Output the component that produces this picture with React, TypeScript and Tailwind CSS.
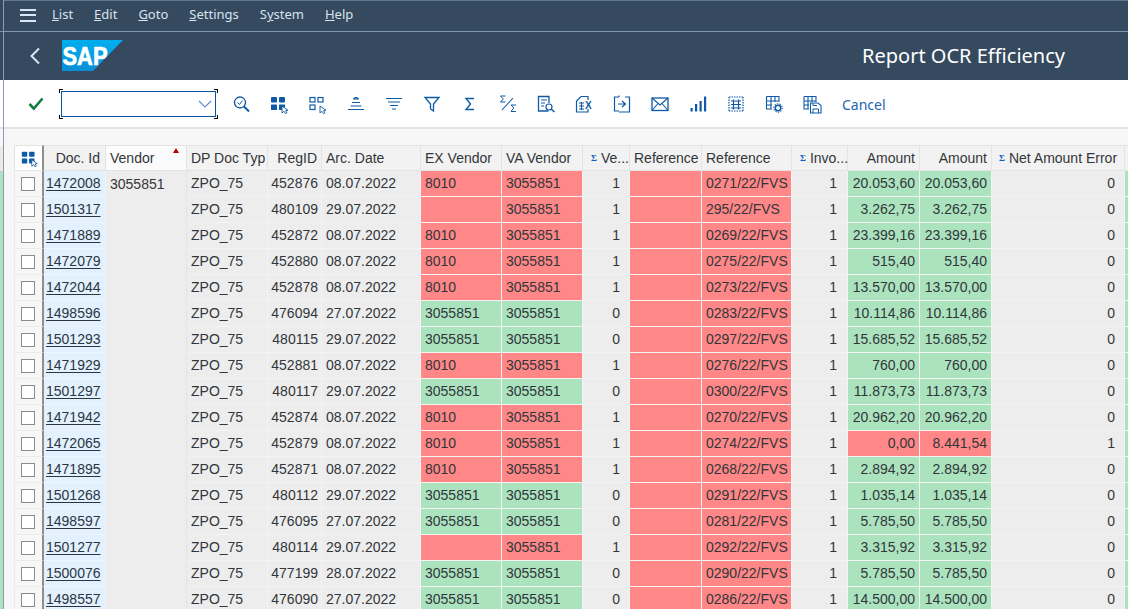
import React from "react";

type Tone = "r" | "g";
type Row = {
  id: string; reg: string; date: string; ex: string; exT: Tone; va: string; vaT: Tone; ve: string;
  ref: string; a1: string; a1T: Tone; a2: string; a2T: Tone; err: string; vendor?: string;
};

const red = (id: string, reg: string, date: string, ex: string, ref: string, amt: string): Row => ({
  id, reg, date, ex, exT: "r", va: "3055851", vaT: "r", ve: "1", ref, a1: amt, a1T: "g", a2: amt, a2T: "g", err: "0",
});
const green = (id: string, reg: string, date: string, ref: string, amt: string): Row => ({
  id, reg, date, ex: "3055851", exT: "g", va: "3055851", vaT: "g", ve: "0", ref, a1: amt, a1T: "g", a2: amt, a2T: "g", err: "0",
});

const rows: Row[] = [
  { ...red("1472008", "452876", "08.07.2022", "8010", "0271/22/FVS", "20.053,60"), vendor: "3055851" },
  red("1501317", "480109", "29.07.2022", "", "295/22/FVS", "3.262,75"),
  red("1471889", "452872", "08.07.2022", "8010", "0269/22/FVS", "23.399,16"),
  red("1472079", "452880", "08.07.2022", "8010", "0275/22/FVS", "515,40"),
  red("1472044", "452878", "08.07.2022", "8010", "0273/22/FVS", "13.570,00"),
  green("1498596", "476094", "27.07.2022", "0283/22/FVS", "10.114,86"),
  green("1501293", "480115", "29.07.2022", "0297/22/FVS", "15.685,52"),
  red("1471929", "452881", "08.07.2022", "8010", "0276/22/FVS", "760,00"),
  green("1501297", "480117", "29.07.2022", "0300/22/FVS", "11.873,73"),
  red("1471942", "452874", "08.07.2022", "8010", "0270/22/FVS", "20.962,20"),
  { ...red("1472065", "452879", "08.07.2022", "8010", "0274/22/FVS", "0,00"), a1T: "r", a2: "8.441,54", a2T: "r", err: "1" },
  red("1471895", "452871", "08.07.2022", "8010", "0268/22/FVS", "2.894,92"),
  green("1501268", "480112", "29.07.2022", "0291/22/FVS", "1.035,14"),
  green("1498597", "476095", "27.07.2022", "0281/22/FVS", "5.785,50"),
  red("1501277", "480114", "29.07.2022", "", "0292/22/FVS", "3.315,92"),
  green("1500076", "477199", "28.07.2022", "0290/22/FVS", "5.785,50"),
  green("1498557", "476090", "27.07.2022", "0286/22/FVS", "14.500,00"),
];

const BLUE = "#0f5aa6";

const Icon = ({ children }: { children: React.ReactNode }) => (
  <button className="w-[38px] h-[24px] flex items-center justify-center shrink-0">
    <svg width="22" height="22" viewBox="0 0 22 22" fill="none" stroke={BLUE} strokeWidth="1.2">
      {children}
    </svg>
  </button>
);

const Cursor = () => (
  <path d="M13 13 L13 20 L15 18.3 L16.5 20.6 L18 19.8 L16.6 17.6 L19 17.2 Z" fill="#fff" stroke={BLUE} strokeWidth="0.9" />
);

const Tile = () => (
  <g>
    <rect x="2" y="4" width="6" height="5.5" rx="1" fill={BLUE} stroke="none" />
    <rect x="10" y="4" width="6" height="5.5" rx="1" fill={BLUE} stroke="none" />
    <rect x="2" y="11.5" width="6" height="5.5" rx="0.5" fill={BLUE} stroke="none" />
    <rect x="10" y="11.5" width="6" height="5.5" rx="0.5" fill={BLUE} stroke="none" />
    <Cursor />
  </g>
);

const Tb = "border-r border-b border-[#f3f3f3]";
const Th = "border-r border-t border-b border-[#e3e3e3] bg-[#f2f2f2] font-normal p-0 whitespace-nowrap";

const tone = (t: Tone) => (t === "r" ? "bg-[#ff8787]" : "bg-[#abe3bf]");

const Sig = () => (
  <span className="text-[9px] font-bold text-[#0a5fc0] mr-[4px] align-[2px]" style={{ fontFamily: '"Liberation Serif", serif' }}>Σ</span>
);

export default function App() {
  return (
    <div className="flex h-screen w-full overflow-hidden bg-[#f7f7f7] text-[14px] text-[#32363a]" style={{ fontFamily: '"Liberation Sans", Arial, sans-serif' }}>
      {/* Window peeking out behind */}
      <div className="w-[3px] shrink-0 flex flex-col">
        <div className="h-[31px] bg-[#354a5f]" />
        <div className="h-[1px] bg-[#7f93a9]" />
        <div className="h-[48px] bg-[#354a5f]" />
        <div className="h-[47px] bg-white" />
        <div className="h-[2px] bg-[#e2e2e2]" />
        <div className="h-[17px] bg-[#f7f7f7]" />
        <div className="h-[25px] bg-[#f1e8e0]" />
        <div className="flex-1 bg-[#abe3bf]" />
      </div>

      <div className="flex-1 min-w-0 flex flex-col border-l border-[#8a9cb2]">
        {/* Menu bar */}
        <div className="h-[32px] shrink-0 bg-[#354a5f] border-t border-[#5f7993] border-b-[#8097b0] border-b flex items-center pl-[16px] pb-[2px] text-[#d7e3ee]" style={{ fontFamily: '"Noto Sans", sans-serif' }}>
          <div className="w-[16px] h-[13px] flex flex-col justify-between mr-[16px]">
            <div className="h-[2px] bg-[#d6e8f8]" />
            <div className="h-[2px] bg-[#d6e8f8]" />
            <div className="h-[2px] bg-[#d6e8f8]" />
          </div>
          <div className="flex gap-[21px] text-[13px]">
            <span><u>L</u>ist</span>
            <span><u>E</u>dit</span>
            <span><u>G</u>oto</span>
            <span><u>S</u>ettings</span>
            <span>S<u>y</u>stem</span>
            <span><u>H</u>elp</span>
          </div>
        </div>

        {/* Title bar */}
        <div className="h-[48px] shrink-0 bg-[#354a5f] flex items-center pl-[25px] pr-[63px]">
          <svg width="12" height="18" viewBox="0 0 12 18" fill="none" className="mr-[21px]">
            <path d="M10 1.5 L2.5 9 L10 16.5" stroke="#d6e8f8" strokeWidth="2" />
          </svg>
          <svg width="62" height="31" viewBox="0 0 62 31" className="mb-[1px]">
            <defs>
              <linearGradient id="sapg" x1="0" y1="0" x2="0" y2="1">
                <stop offset="0" stopColor="#00aeef" />
                <stop offset="1" stopColor="#0a8fd6" />
              </linearGradient>
            </defs>
            <polygon points="0,0 61,0 31,31 0,31" fill="url(#sapg)" />
            <text x="0.5" y="24.5" fontSize="25" fontWeight="700" fill="#fff" textLength="45" lengthAdjust="spacingAndGlyphs" style={{ fontFamily: '"Liberation Sans", sans-serif' }} stroke="#fff" strokeWidth="0.7">SAP</text>
          </svg>
          <div className="ml-auto text-[20px] text-white" style={{ fontFamily: '"Noto Sans", sans-serif' }}>Report OCR Efficiency</div>
        </div>

        {/* Toolbar */}
        <div className="h-[47px] shrink-0 bg-white border-b-0 flex items-center pl-[24px]">
          <svg width="16" height="14" viewBox="0 0 16 14" fill="none" className="mr-[17px]">
            <path d="M1.5 7 L5.8 11.6 L14.5 1.5" stroke="#107e3e" strokeWidth="2.6" />
          </svg>
          <div className="relative w-[155px] h-[26px] border border-[#0854a0] bg-white flex items-center justify-end pr-[3px] mr-[7px]">
            <svg width="14" height="8" viewBox="0 0 14 8" fill="none"><path d="M1 1 L7 7 L13 1" stroke="#5a8ec8" strokeWidth="1.1" /></svg>
            <span className="absolute -left-[3px] -top-[3px] w-[4px] h-[4px] border-l border-t border-black" />
            <span className="absolute -right-[3px] -top-[3px] w-[4px] h-[4px] border-r border-t border-black" />
            <span className="absolute -left-[3px] -bottom-[3px] w-[4px] h-[4px] border-l border-b border-black" />
            <span className="absolute -right-[3px] -bottom-[3px] w-[4px] h-[4px] border-r border-b border-black" />
          </div>

          <Icon>
            <circle cx="9" cy="9.5" r="5.5" strokeWidth="1.3" />
            <path d="M13 13.5 L18 18.5" strokeWidth="2" />
            <path d="M6.5 9.5 L8.5 11.5 L11.5 7.5" strokeWidth="1" />
          </Icon>
          <Icon><Tile /></Icon>
          <Icon>
            <rect x="3" y="4.5" width="5" height="4.5" />
            <rect x="11" y="4.5" width="5" height="4.5" />
            <rect x="3" y="12" width="5" height="4.5" />
            <Cursor />
          </Icon>
          <Icon>
            <path d="M8.5 6 H13.5 M7 9.5 H15 M5.5 13 H16.5 M3 16.5 H19" />
            <path d="M8.5 6 Q11 3.5 13.5 6" />
          </Icon>
          <Icon>
            <path d="M3 5.5 H19 M5 9 H17 M7 12.5 H15 M9 16 H13" />
          </Icon>
          <Icon>
            <path d="M4 4.5 H18 L12.5 11 V18 L9.5 16 V11 Z" strokeWidth="1.3" />
          </Icon>
          <Icon>
            <path d="M15 5.5 H7 L11.5 11 L7 16.5 H15" strokeWidth="1.4" />
          </Icon>
          <Icon>
            <path d="M8.5 3 H3.5 L6.3 6 L3.5 9 H8.5" strokeWidth="1" />
            <path d="M5 17 L16 5" strokeWidth="1.1" />
            <path d="M19 12 H14 L16.8 15 L14 18.5 H19" strokeWidth="1" />
          </Icon>
          <Icon>
            <path d="M13.5 18 H3.5 V3.5 H14 V10" strokeWidth="1.3" />
            <path d="M6 7 H12 M6 10 H10 M6 13 H9" strokeWidth="1.2" />
            <circle cx="14" cy="14" r="3" strokeWidth="1.2" />
            <path d="M16 16 L19.5 19" strokeWidth="1.6" />
          </Icon>
          <Icon>
            <path d="M3.5 8 L8 3.5 H15 V7 M15 16 V19 H3.5 V8" strokeWidth="1.2" />
            <path d="M6 10 H11 M6 13 H11 M6 16 H11 M8.5 9 V17" strokeWidth="1.1" />
            <text x="12" y="15.5" fontSize="10" fontWeight="700" fill={BLUE} stroke="none" style={{ fontFamily: '"Liberation Sans", sans-serif' }}>X</text>
          </Icon>
          <Icon>
            <path d="M8 4 H3.5 V18 H8 M14 4 H18.5 V19 H8 M8 4 V2.5 M14 4" strokeWidth="1.2" />
            <path d="M7 11 H14 M11 8 L14.5 11 L11 14" strokeWidth="1.2" />
          </Icon>
          <Icon>
            <rect x="3" y="5" width="16" height="12.5" strokeWidth="1.3" />
            <path d="M3 5 L11 12 L19 5 M3 17.5 L9 10.5 M19 17.5 L13 10.5" strokeWidth="1.1" />
          </Icon>
          <Icon>
            <rect x="3.5" y="15" width="2.2" height="3.5" fill={BLUE} stroke="none" />
            <rect x="8" y="11" width="2.2" height="7.5" fill={BLUE} stroke="none" />
            <rect x="12.5" y="8" width="2.2" height="10.5" fill={BLUE} stroke="none" />
            <rect x="17" y="3.5" width="2.2" height="15" fill={BLUE} stroke="none" />
          </Icon>
          <Icon>
            <path d="M4 4 H18 M4 18 H18 M4 4 V18 M18 4 V18" strokeWidth="1.2" strokeDasharray="1.5 1" />
            <path d="M6 8 H16 M6 11.5 H16 M6 15 H16 M8.5 6.5 V16.5 M13.5 6.5 V16.5" strokeWidth="1.2" />
          </Icon>
          <Icon>
            <path d="M3.5 3.5 H16 V9 M3.5 3.5 V16 H9 M3.5 8 H16 M3.5 12 H9 M8 3.5 V16 M12 3.5 V9" strokeWidth="1.1" />
            <circle cx="15" cy="15" r="2.7" strokeWidth="1.5" />
            <circle cx="15" cy="15" r="4.2" strokeWidth="1.1" strokeDasharray="1.3 1.3" />
          </Icon>
          <Icon>
            <path d="M3 3.5 H15 V9 M3 3.5 V16 H8 M3 8 H15 M3 12 H8 M7 3.5 V16 M11 3.5 V9" strokeWidth="1.1" />
            <path d="M9.5 10 H17 L20 12.5 V20 H9.5 Z" fill="#fff" strokeWidth="1.1" />
            <path d="M12 20 V16 H17.5 V20 M12 10 V12.5 H16" strokeWidth="1" />
          </Icon>
          <div className="ml-[11px] mt-[2px] text-[14px] text-[#1b63b5]" style={{ fontFamily: '"Noto Sans", sans-serif' }}>Cancel</div>
        </div>

        {/* Table area */}
        <div className="flex-1 min-h-0 overflow-hidden border-t-2 border-[#e2e2e2] bg-[#f7f7f7] pt-[16px] pl-[10px]">
          <table className="table-fixed border-separate border-spacing-0 w-[1134px]">
            <colgroup>
              <col className="w-[30px]" />
              <col className="w-[62px]" />
              <col className="w-[81px]" />
              <col className="w-[81px]" />
              <col className="w-[54px]" />
              <col className="w-[99px]" />
              <col className="w-[81px]" />
              <col className="w-[81px]" />
              <col className="w-[47px]" />
              <col className="w-[72px]" />
              <col className="w-[90px]" />
              <col className="w-[56px]" />
              <col className="w-[72px]" />
              <col className="w-[72px]" />
              <col className="w-[133px]" />
              <col className="w-[23px]" />
            </colgroup>
            <thead>
              <tr className="h-[26px]">
                <th className="border border-r-2 border-[#e3e3e3] border-r-[#8f8f8f] bg-white p-0">
                  <svg width="20" height="20" viewBox="0 0 22 22" fill="none" stroke={BLUE} className="block ml-[5px]"><Tile /></svg>
                </th>
                <th className={`${Th} text-right pr-[5px]`}>Doc. Id</th>
                <th className="border-r border-t border-b border-[#e3e3e3] bg-[#fbfbfb] font-normal text-left pl-[4px] relative">
                  Vendor
                  <span className="absolute right-[7px] top-[2px] w-0 h-0 border-l-[3.5px] border-r-[3.5px] border-b-[5px] border-l-transparent border-r-transparent border-b-[#bb0000]" />
                </th>
                <th className={`${Th} text-left pl-[4px]`}>DP Doc Typ</th>
                <th className={`${Th} text-right pr-[4px]`}>RegID</th>
                <th className={`${Th} text-left pl-[4px]`}>Arc. Date</th>
                <th className={`${Th} text-left pl-[4px]`}>EX Vendor</th>
                <th className={`${Th} text-left pl-[4px]`}>VA Vendor</th>
                <th className={`${Th} text-left pl-[8px]`}><Sig />Ve...</th>
                <th className={`${Th} text-left pl-[4px]`}>Reference</th>
                <th className={`${Th} text-left pl-[4px]`}>Reference</th>
                <th className={`${Th} text-left pl-[8px]`}><Sig />Invo...</th>
                <th className={`${Th} text-right pr-[4px]`}>Amount</th>
                <th className={`${Th} text-right pr-[4px]`}>Amount</th>
                <th className={`${Th} text-left pl-[7px]`}><Sig />Net Amount Error</th>
                <th className={Th} />
              </tr>
            </thead>
            <tbody>
              {rows.map((r) => (
                <tr key={r.id} className="h-[26px]">
                  <td className="border-l border-r-2 border-b border-[#ececec] border-r-[#8f8f8f] bg-[#f7f7f7] p-0">
                    <div className="w-[14px] h-[14px] ml-[6px] bg-white border border-[#8c8c8c]" />
                  </td>
                  <td className="border-r border-b border-[#f0f5fb] bg-[#e3f0fd] pl-[2px] p-0 text-[#2a3644] underline underline-offset-2">{r.id}</td>
                  <td className="border-r border-[#e5e5e5] bg-[#ededed] pl-[4px] p-0">{r.vendor ?? ""}</td>
                  <td className={`${Tb} bg-[#ededed] pl-[4px] p-0`}>ZPO_75</td>
                  <td className={`${Tb} bg-[#ededed] text-right pr-[3px] p-0`}>{r.reg}</td>
                  <td className={`${Tb} bg-[#ededed] pl-[4px] p-0`}>{r.date}</td>
                  <td className={`${Tb} ${tone(r.exT)} pl-[4px] p-0`}>{r.ex}</td>
                  <td className={`${Tb} ${tone(r.vaT)} pl-[4px] p-0`}>{r.va}</td>
                  <td className={`${Tb} bg-[#ededed] text-right pr-[9px] p-0`}>{r.ve}</td>
                  <td className={`${Tb} bg-[#ff8787] p-0`} />
                  <td className={`${Tb} bg-[#ff8787] pl-[4px] p-0`}>{r.ref}</td>
                  <td className={`${Tb} bg-[#ededed] text-right pr-[10px] p-0`}>1</td>
                  <td className={`${Tb} ${tone(r.a1T)} text-right pr-[4px] p-0`}>{r.a1}</td>
                  <td className={`${Tb} ${tone(r.a2T)} text-right pr-[4px] p-0`}>{r.a2}</td>
                  <td className={`${Tb} bg-[#ededed] text-right pr-[9px] p-0`}>{r.err}</td>
                  <td className={`${Tb} bg-[#abe3bf] p-0`} />
                </tr>
              ))}
            </tbody>
          </table>
        </div>
      </div>
    </div>
  );
}
